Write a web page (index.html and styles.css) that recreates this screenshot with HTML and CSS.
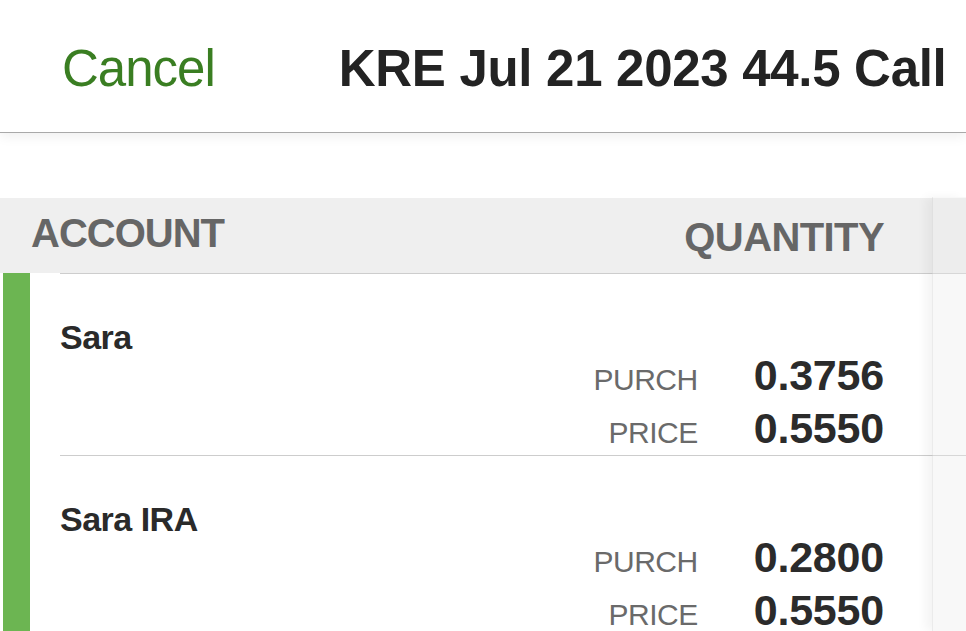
FILE: index.html
```html
<!DOCTYPE html>
<html>
<head>
<meta charset="utf-8">
<link rel="stylesheet" href="styles.css">
</head>
<body>
<header class="navbar">
  <span class="cancel">Cancel</span>
  <span class="title">KRE Jul 21 2023 44.5 Call</span>
</header>
<main class="table">
  <div class="thead">
    <span class="th th-account">ACCOUNT</span>
    <span class="th th-qty">QUANTITY</span>
  </div>
  <div class="row">
    <div class="bar"></div>
    <div class="cell">
      <div class="name">Sara</div>
      <div class="vals">
        <span class="label">PURCH</span><span class="num">0.3756</span>
        <span class="label">PRICE</span><span class="num">0.5550</span>
      </div>
    </div>
  </div>
  <div class="row">
    <div class="bar"></div>
    <div class="cell">
      <div class="name">Sara IRA</div>
      <div class="vals">
        <span class="label">PURCH</span><span class="num">0.2800</span>
        <span class="label">PRICE</span><span class="num">0.5550</span>
      </div>
    </div>
  </div>
  <div class="side-panel"></div>
</main>
</body>
</html>
```

FILE: styles.css
```css
html, body {
  margin: 0;
  padding: 0;
  background: #ffffff;
  width: 966px;
  height: 631px;
  overflow: hidden;
  font-family: "Liberation Sans", Arial, Helvetica, sans-serif;
}

.navbar {
  box-sizing: border-box;
  height: 133px;
  display: flex;
  align-items: flex-start;
  padding: 43px 0 0 62px;
  background: #ffffff;
  border-bottom: 1px solid #a9a9a9;
  box-shadow: 0 3px 12px rgba(0, 0, 0, 0.07);
  position: relative;
  z-index: 2;
}

.cancel {
  font-size: 51px;
  line-height: 1;
  letter-spacing: -1px;
  color: #3a7e22;
}

.title {
  margin-left: 124px;
  font-size: 51px;
  line-height: 1;
  font-weight: bold;
  letter-spacing: -0.3px;
  color: #232323;
  white-space: nowrap;
}

.table {
  position: relative;
  margin-top: 65px;
  height: 433px;
}

.thead {
  box-sizing: border-box;
  height: 75px;
  background: #efefef;
  display: flex;
  justify-content: space-between;
  align-items: flex-start;
  padding: 15px 82px 0 31px;
}

.th {
  font-size: 40px;
  line-height: 1;
  font-weight: bold;
  color: #666666;
}

.th-account {
  letter-spacing: -1px;
}

.th-qty {
  margin-top: 4px;
  letter-spacing: -0.6px;
}

.row {
  display: flex;
  height: 182px;
}

.bar {
  width: 27px;
  margin-left: 3px;
  background: #6cb552;
  flex: none;
}

.cell {
  flex: 1;
  margin-left: 30px;
  border-top: 1px solid #cdcdcd;
  padding: 46px 82px 0 0;
}

.name {
  font-size: 34px;
  line-height: 1;
  font-weight: bold;
  letter-spacing: -0.5px;
  color: #2a2a2a;
}

.vals {
  display: grid;
  grid-template-columns: auto auto;
  justify-content: end;
  column-gap: 56px;
  row-gap: 10px;
  align-items: baseline;
}

.label {
  font-size: 30px;
  line-height: 1;
  letter-spacing: -0.5px;
  color: #6a6a6a;
  text-align: right;
}

.num {
  font-size: 43px;
  line-height: 1;
  font-weight: bold;
  letter-spacing: -0.2px;
  color: #2b2b2b;
  text-align: right;
}

.side-panel {
  position: absolute;
  top: -1px;
  left: 932px;
  right: 0;
  bottom: 0;
  background: rgba(236, 236, 236, 0.35);
  border-left: 1px solid rgba(0, 0, 0, 0.05);
  box-shadow: -7px 0 9px rgba(0, 0, 0, 0.045);
}
```
